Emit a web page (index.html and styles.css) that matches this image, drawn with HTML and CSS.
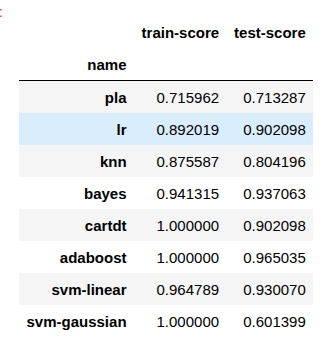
FILE: index.html
```html
<!DOCTYPE html>
<html>
<head>
<meta charset="utf-8">
<link rel="stylesheet" href="styles.css">
</head>
<body>
<div class="cell">
  <div class="prompt"><span class="prompt-text">Out[24]:</span></div>
  <table class="dataframe">
    <thead>
      <tr><th></th><th>train-score</th><th>test-score</th></tr>
      <tr class="index-row"><th>name</th><th></th><th></th></tr>
    </thead>
    <tbody>
      <tr><th>pla</th><td>0.715962</td><td>0.713287</td></tr>
      <tr class="hover"><th>lr</th><td>0.892019</td><td>0.902098</td></tr>
      <tr><th>knn</th><td>0.875587</td><td>0.804196</td></tr>
      <tr><th>bayes</th><td>0.941315</td><td>0.937063</td></tr>
      <tr><th>cartdt</th><td>1.000000</td><td>0.902098</td></tr>
      <tr><th>adaboost</th><td>1.000000</td><td>0.965035</td></tr>
      <tr><th>svm-linear</th><td>0.964789</td><td>0.930070</td></tr>
      <tr><th>svm-gaussian</th><td>1.000000</td><td>0.601399</td></tr>
    </tbody>
  </table>
</div>
</body>
</html>
```
FILE: styles.css
```css
html, body {
  margin: 0;
  padding: 0;
  background: #ffffff;
}
body {
  font-family: "Liberation Sans", Arial, sans-serif;
  font-size: 15px;
  color: #000000;
}
.cell {
  display: flex;
  align-items: flex-start;
  gap: 17px;
}
.prompt {
  width: 2px;
  flex: none;
  display: flex;
  justify-content: flex-end;
  overflow: hidden;
  margin-top: 3px;
  line-height: 17px;
  color: #e0312b;
  white-space: nowrap;
}
.prompt-text {
  flex: none;
  margin-right: -1px;
}
.dataframe {
  margin-top: 16px;
  border-collapse: collapse;
  border-spacing: 0;
  border: none;
}
.dataframe th,
.dataframe td {
  padding: 7.5px 7.5px;
  line-height: 17px;
  text-align: right;
  vertical-align: middle;
  white-space: nowrap;
}
.dataframe th {
  font-weight: bold;
}
.dataframe td {
  font-weight: normal;
}
.index-row th {
  border-bottom: 1px solid #000000;
}
.dataframe tbody tr:nth-child(odd) {
  background: #f5f5f5;
}
.dataframe tbody tr.hover {
  background: #d9edfd;
}
```
